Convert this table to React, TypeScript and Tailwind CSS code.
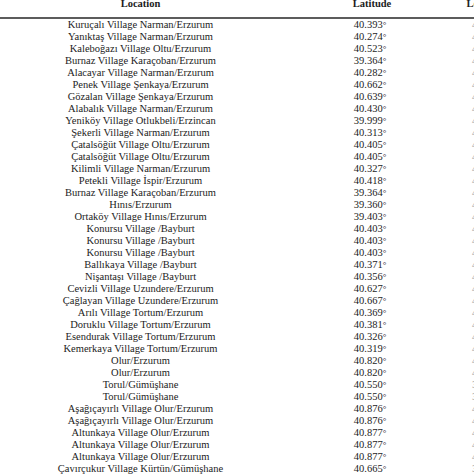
import React from "react";

const rows: [string, string, string][] = [
  ["Kuruçalı Village Narman/Erzurum", "40.393", "41.963"],
  ["Yanıktaş Village Narman/Erzurum", "40.274", "41.896"],
  ["Kaleboğazı Village Oltu/Erzurum", "40.523", "41.985"],
  ["Burnaz Village Karaçoban/Erzurum", "39.364", "41.842"],
  ["Alacayar Village Narman/Erzurum", "40.282", "41.924"],
  ["Penek Village Şenkaya/Erzurum", "40.662", "42.293"],
  ["Gözalan Village Şenkaya/Erzurum", "40.639", "42.415"],
  ["Alabalık Village Narman/Erzurum", "40.430", "41.987"],
  ["Yeniköy Village Otlukbeli/Erzincan", "39.999", "40.012"],
  ["Şekerli Village Narman/Erzurum", "40.313", "41.973"],
  ["Çatalsöğüt Village Oltu/Erzurum", "40.405", "41.929"],
  ["Çatalsöğüt Village Oltu/Erzurum", "40.405", "41.929"],
  ["Kilimli Village Narman/Erzurum", "40.327", "41.902"],
  ["Petekli Village İspir/Erzurum", "40.418", "41.006"],
  ["Burnaz Village Karaçoban/Erzurum", "39.364", "41.842"],
  ["Hınıs/Erzurum", "39.360", "41.697"],
  ["Ortaköy Village Hınıs/Erzurum", "39.403", "41.733"],
  ["Konursu Village /Bayburt", "40.403", "40.298"],
  ["Konursu Village /Bayburt", "40.403", "40.298"],
  ["Konursu Village /Bayburt", "40.403", "40.298"],
  ["Ballıkaya Village /Bayburt", "40.371", "40.171"],
  ["Nişantaşı Village /Bayburt", "40.356", "40.208"],
  ["Cevizli Village Uzundere/Erzurum", "40.627", "41.523"],
  ["Çağlayan Village Uzundere/Erzurum", "40.667", "41.588"],
  ["Arılı Village Tortum/Erzurum", "40.369", "41.573"],
  ["Doruklu Village Tortum/Erzurum", "40.381", "41.602"],
  ["Esendurak Village Tortum/Erzurum", "40.326", "41.545"],
  ["Kemerkaya Village Tortum/Erzurum", "40.319", "41.617"],
  ["Olur/Erzurum", "40.820", "42.129"],
  ["Olur/Erzurum", "40.820", "42.129"],
  ["Torul/Gümüşhane", "40.550", "39.291"],
  ["Torul/Gümüşhane", "40.550", "39.291"],
  ["Aşağıçayırlı Village Olur/Erzurum", "40.876", "42.084"],
  ["Aşağıçayırlı Village Olur/Erzurum", "40.876", "42.084"],
  ["Altunkaya Village Olur/Erzurum", "40.877", "42.145"],
  ["Altunkaya Village Olur/Erzurum", "40.877", "42.145"],
  ["Altunkaya Village Olur/Erzurum", "40.877", "42.145"],
  ["Çavırçukur Village Kürtün/Gümüşhane", "40.665", "39.073"],
];

function Deg({ v }: { v: string }) {
  return (
    <span>
      {v}
      <span className="text-[9px]">°</span>
    </span>
  );
}

export default function App() {
  return (
    <div
      className="w-[474px] h-[474px] overflow-hidden bg-white text-[#1c1c1c] text-[10.5px]"
      style={{ fontFamily: '"Liberation Serif", "Times New Roman", serif' }}
    >
      <div className="grid grid-cols-[281px_178px_120px] h-[17px] leading-[8px] font-bold whitespace-nowrap">
        <div className="text-center">Location</div>
        <div className="text-center pl-[4px]">Latitude</div>
        <div className="pl-[7.5px]">Longitude</div>
      </div>
      <div className="h-[2px] bg-[#5c5c5c] w-[474px]" />
      <div className="flex flex-col">
        {rows.map(([loc, lat, lon], i) => (
          <div
            key={i}
            className="grid grid-cols-[281px_178px_120px] h-[12px] leading-[12px] whitespace-nowrap"
          >
            <div className="text-center">{loc}</div>
            <div className="text-center">
              <Deg v={lat} />
            </div>
            <div className="pl-[13px] text-[#a0a0a0]">
              <Deg v={lon} />
            </div>
          </div>
        ))}
      </div>
    </div>
  );
}
